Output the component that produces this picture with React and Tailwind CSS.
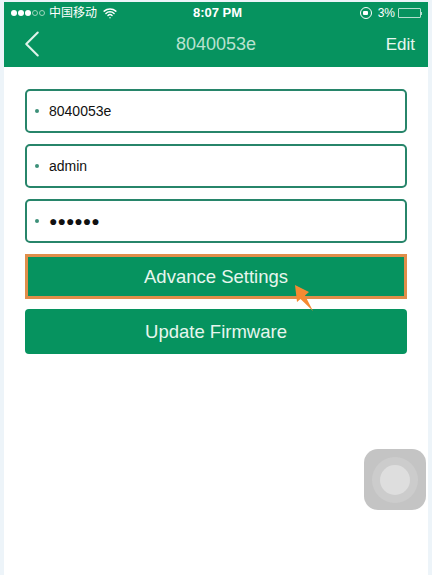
import { useState } from "react";
import { ChevronLeft, Wifi } from "lucide-react";

const sans = "font-['Liberation_Sans','Noto_Sans_CJK_SC',sans-serif]";

function Field({ value }) {
  return (
    <div className="flex h-[44px] items-center rounded-[5px] border-2 border-[#27856a] bg-white pl-[8px]">
      <span className="h-[4px] w-[4px] rounded-full bg-[#3d9079]" />
      <span className="ml-[10px] text-[14px] text-[#111]">{value}</span>
    </div>
  );
}

export default function App() {
  const [fields] = useState(["8040053e", "admin"]);

  return (
    <div className={`relative h-[575px] w-[432px] overflow-hidden bg-[#edf4f9] px-[4px] pt-[2px] ${sans}`}>
      <div className="flex h-full flex-col bg-white">
        <header className="h-[65px] bg-[#06935f] text-white">
          <div className="flex h-[22px] items-center justify-between pl-[7px] pr-[6px]">
            <div className="flex w-[140px] items-center">
              <span className="flex items-center gap-[1px]">
                <i className="h-[6px] w-[6px] rounded-full bg-white" />
                <i className="h-[6px] w-[6px] rounded-full bg-white" />
                <i className="h-[6px] w-[6px] rounded-full bg-white" />
                <i className="h-[6px] w-[6px] rounded-full border border-[#9fd4bc]" />
                <i className="h-[6px] w-[6px] rounded-full border border-[#9fd4bc]" />
              </span>
              <span className="ml-[4px] text-[12px]">中国移动</span>
              <Wifi size={14} strokeWidth={2.5} className="ml-[6px]" />
            </div>
            <span className="ml-[2px] text-[13px] font-bold">8:07 PM</span>
            <div className="flex w-[140px] items-center justify-end">
              <span className="flex h-[12px] w-[12px] items-center justify-center rounded-full border border-white">
                <i className="h-[4px] w-[5px] rounded-[1px] bg-white" />
              </span>
              <span className="ml-[6px] text-[12px]">3%</span>
              <span className="ml-[3px] h-[10px] w-[23px] rounded-[1px] border border-white/70" />
              <span className="h-[3px] w-[1px] bg-white/70" />
            </div>
          </div>
          <div className="grid h-[43px] grid-cols-[1fr_auto_1fr] items-center pr-[13px]">
            <ChevronLeft size={46} strokeWidth={1.1} className="-my-[2px] ml-[5px] -translate-y-[2px] text-[#dff3ea]" />
            <span className="ml-[13px] -translate-y-[1px] text-[18px] text-[#b9e2cf]">8040053e</span>
            <span className="justify-self-end -translate-y-[1px] text-[17px] text-[#e8f6ef]">Edit</span>
          </div>
        </header>

        <main className="flex flex-col gap-[11px] px-[21px] pt-[22px]">
          {fields.map((f) => (
            <Field key={f} value={f} />
          ))}
          <Field value="●●●●●●" />
          <button className="h-[45px] border-[3px] border-[#e08e4a] bg-[#06935f] pt-[1px] text-[18.5px] text-[#e6f6ee]">
            Advance Settings
          </button>
          <button className="-mt-px h-[45px] rounded-[4px] bg-[#06935f] pt-[1px] text-[18.5px] text-[#e6f6ee]">
            Update Firmware
          </button>
        </main>
      </div>

      <svg className="absolute left-[293px] top-[283px]" width="22" height="30" viewBox="0 0 22 30">
        <path d="M2 2 L16 9 L12 12.5 L20 28 L7.5 16 L4 19 Z" fill="#f58a32" />
      </svg>

      <div className="absolute left-[364px] top-[449px] flex h-[61px] w-[62px] items-center justify-center rounded-[14px] bg-[#c4c4c4]">
        <div className="flex h-[46px] w-[46px] items-center justify-center rounded-full bg-[#cccccc]">
          <div className="h-[30px] w-[30px] rounded-full bg-[#dedede]" />
        </div>
      </div>
    </div>
  );
}
